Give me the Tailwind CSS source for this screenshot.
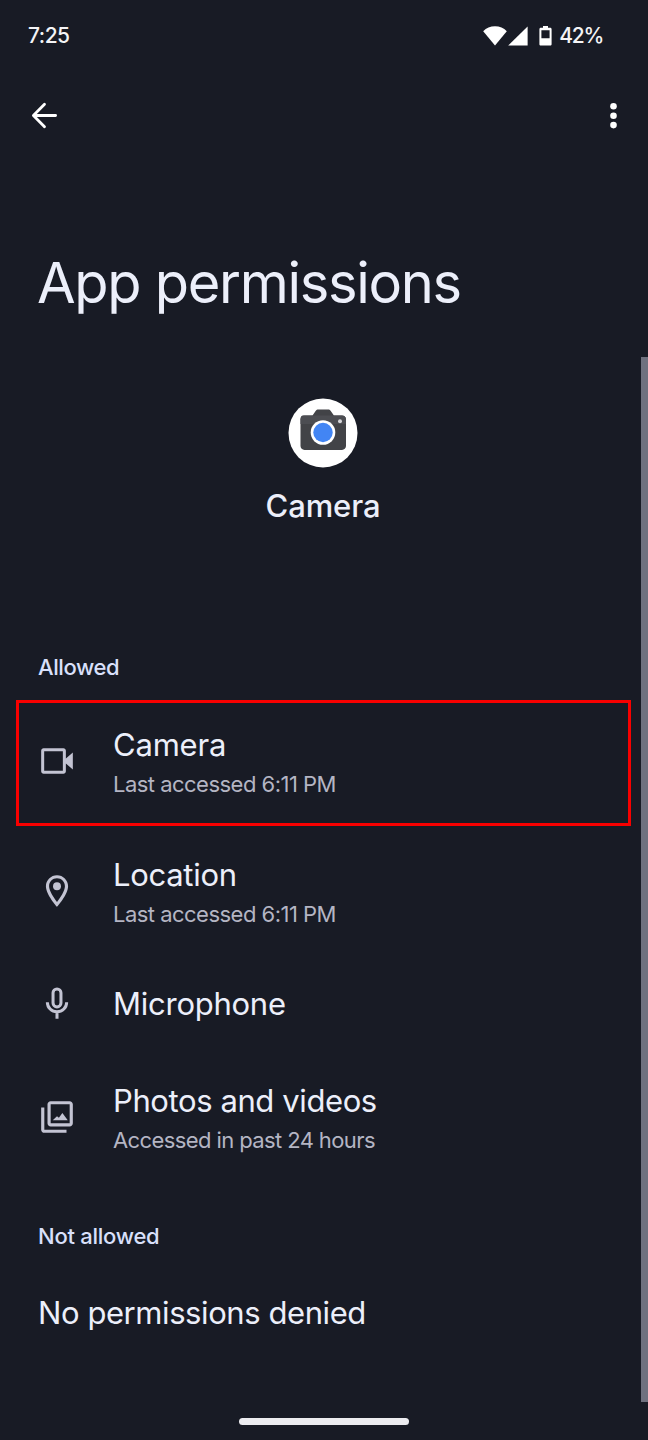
<!DOCTYPE html>
<html lang="en">
<head>
    <meta charset="UTF-8">
    <meta name="viewport" content="width=device-width, initial-scale=1.0">
    <title>App permissions</title>
    <script src="https://cdn.jsdelivr.net/npm/@tailwindcss/browser@4"></script>
</head>
<body class="bg-[#181b25] font-[Inter,'Liberation_Sans',sans-serif] text-[#eceffa]">
    <div class="relative flex flex-col w-[648px] h-[1440px] overflow-hidden">
        <!-- status bar -->
        <div class="flex items-center justify-between h-[72px] pl-7 pr-[45px] shrink-0 text-[21px] font-medium text-[#f4f4f6]">
            <span class="tracking-[-0.5px]">7:25</span>
            <div class="flex items-center">
                <svg class="w-6 h-5" viewBox="0 0 24 20" fill="white"><path d="M12 19.600L.2 5.200C3.200 2 7.400.3 12 .3s8.800 1.700 11.800 4.900z"/></svg>
                <svg class="w-5 h-5 ml-[1px]" viewBox="0 0 20 20" fill="white"><path d="M.2 19.600L19.600.4v19.200z"/></svg>
                <svg class="w-[13px] h-5 ml-[11px] mr-[7px]" viewBox="0 0 13 20" fill="white"><path fill-rule="evenodd" d="M4 0h5v1.800h2.200c.8 0 1.400.6 1.400 1.400v15c0 .8-.6 1.400-1.400 1.400H1.800c-.8 0-1.400-.6-1.400-1.400v-15c0-.8.6-1.400 1.400-1.400H4zM2.400 4.200v8h8.200v-8z"/></svg>
                <span class="tracking-[-1.3px]">42%</span>
            </div>
        </div>
        <!-- toolbar -->
        <div class="flex items-center justify-between h-[86px] pl-[31px] pr-[30px] shrink-0">
            <svg class="w-[27px] h-[27px]" viewBox="0 0 27 27" fill="none" stroke="white" stroke-width="2.800" stroke-linecap="round" stroke-linejoin="round"><path d="M13.500 2.200L2.400 13.500l11.100 11.300M2.600 13.500h22" /></svg>
            <svg class="w-[9px] h-[27px]" viewBox="0 0 9 27" fill="white"><circle cx="4.500" cy="4.200" r="3.300"/><circle cx="4.500" cy="13.700" r="3.300"/><circle cx="4.500" cy="23.100" r="3.300"/></svg>
        </div>
        <h1 class="mt-[89px] ml-[37px] h-[72px] leading-[72px] text-[56px] tracking-[-1.3px] whitespace-nowrap">App permissions</h1>
        <!-- app header -->
        <div class="flex flex-col items-center mt-[79px] -ml-[2px]">
            <svg class="w-[70px] h-[70px]" viewBox="0 0 70 70">
                <circle cx="35" cy="35" r="34.500" fill="white"/>
                <path d="M15 17.500h9.500l3.300-4.700c.6-.9 1.400-1.300 2.400-1.300h10c1 0 1.800.4 2.400 1.300l3.300 4.700H54c2.200 0 4 1.700 4 3.900v26.700c0 2.200-1.800 3.900-4 3.900H16.500c-2.200 0-4-1.700-4-3.900V21.400c0-2.200 1-3.900 2.500-3.900z" fill="#424347"/>
                <path d="M12.500 26V21.400c0-2.200 1.800-3.900 4-3.900H54c2.200 0 4 1.700 4 3.900V26z" fill="#4c4d52"/>
                <circle cx="35" cy="34.500" r="12.300" fill="white"/>
                <circle cx="35" cy="34.500" r="9.700" fill="#4285f4"/>
                <circle cx="52" cy="23.300" r="2" fill="#d8d8dc"/>
            </svg>
            <p class="mt-[18px] h-10 leading-10 text-[31px] font-medium tracking-[-0.1px]">Camera</p>
        </div>
        <h2 class="mt-[123px] ml-[38px] h-9 leading-9 text-[22px] font-medium tracking-[-0.4px] text-[#d9e0fb]">Allowed</h2>
        <div class="mt-[15px] mx-[17px] flex flex-col">
            <div class="flex items-center h-[126px] w-[615px] -ml-px pl-[19px] border-3 border-[#f80000]">
                <svg class="w-[38px] h-[38px] shrink-0 -mt-1" viewBox="0 0 24 24" fill="#c3c4d3"><path fill-rule="evenodd" d="M3.500 4h12.600c.8 0 1.500.7 1.500 1.500v4.900L22 6.700v10.600l-4.400-3.700v4.900c0 .8-.7 1.500-1.500 1.500H3.500c-.8 0-1.500-.7-1.500-1.500v-13C2 4.700 2.700 4 3.500 4zm.4 1.900v12.200h11.800V5.900z"/></svg>
                <div class="ml-[37px]">
                    <p class="h-10 leading-10 text-[31px] tracking-[-0.2px]">Camera</p>
                    <p class="mt-px h-9 leading-9 text-[22px] tracking-[-0.52px] text-[#b4b5c3]">Last accessed 6:11 PM</p>
                </div>
            </div>
            <div class="flex items-center h-[126px] mt-1 pl-[21px]">
                <svg class="w-[38px] h-[38px] shrink-0 -mt-1" viewBox="0 0 24 24" fill="#c3c4d3"><path d="M12 2C8.130 2 5 5.130 5 9c0 5.250 7 13 7 13s7-7.750 7-13c0-3.870-3.130-7-7-7zM7 9c0-2.760 2.240-5 5-5s5 2.240 5 5c0 2.880-2.880 7.190-5 9.880C9.920 16.210 7 11.850 7 9z"/><circle cx="12" cy="9" r="2.500"/></svg>
                <div class="ml-[37px]">
                    <p class="h-10 leading-10 text-[31px] tracking-[-0.3px]">Location</p>
                    <p class="mt-px h-9 leading-9 text-[22px] tracking-[-0.52px] text-[#b4b5c3]">Last accessed 6:11 PM</p>
                </div>
            </div>
            <div class="flex items-center h-[92px] pl-[21px] mt-[1px]">
                <svg class="w-[38px] h-[38px] shrink-0" viewBox="0 0 24 24" fill="none" stroke="#c3c4d3" stroke-width="1.900"><rect x="9.500" y="3.100" width="5" height="11.400" rx="2.500"/><path d="M5.900 11.500c0 3.400 2.700 6.100 6.100 6.100s6.100-2.700 6.100-6.100M12 17.600v4.300"/></svg>
                <p class="ml-[37px] mt-[2px] h-10 leading-10 text-[31px] tracking-[-0.25px]">Microphone</p>
            </div>
            <div class="flex items-center h-[126px] mt-[7px] pl-[21px]">
                <svg class="w-[38px] h-[38px] shrink-0 -mt-1" viewBox="0 0 24 24" fill="#c3c4d3"><path d="M20 4v12H8V4h12m0-2H8c-1.100 0-2 .9-2 2v12c0 1.100.9 2 2 2h12c1.100 0 2-.9 2-2V4c0-1.100-.9-2-2-2zM12 11.500l-2.700 2.600h9.500l-3.400-4.600-2.200 2.900zM2 6v14c0 1.100.9 2 2 2h14v-2H4V6H2z"/></svg>
                <div class="ml-[37px]">
                    <p class="h-10 leading-10 text-[31px] tracking-[-0.4px]">Photos and videos</p>
                    <p class="mt-px h-9 leading-9 text-[22px] tracking-[-0.6px] text-[#b4b5c3]">Accessed in past 24 hours</p>
                </div>
            </div>
        </div>
        <h2 class="mt-[36px] ml-[38px] h-9 leading-9 text-[22px] font-medium tracking-[-0.25px] text-[#d9e0fb]">Not allowed</h2>
        <p class="mt-[39px] ml-[38px] h-10 leading-10 text-[31px] tracking-[-0.42px]">No permissions denied</p>
        <!-- gesture bar -->
        <div class="mt-auto mb-[15px] mx-auto w-[170px] h-[7px] rounded-full bg-[#ececf0]"></div>
        <!-- scrollbar -->
        <div class="absolute right-0 top-[357px] w-[7px] h-[1045px] bg-[#6f717f]"></div>
    </div>
</body>
</html>
